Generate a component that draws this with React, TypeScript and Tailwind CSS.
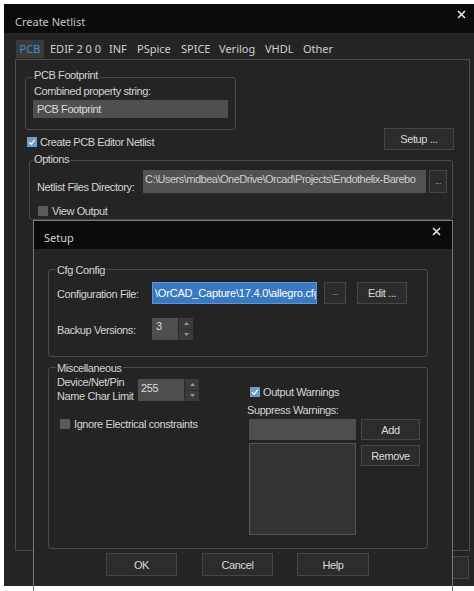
import React from "react";

function CheckBox({ checked }: { checked: boolean }) {
  return checked ? (
    <span className="w-[10px] h-[10px] bg-[#6f9bc4] flex items-center justify-center shrink-0">
      <svg width="8" height="8" viewBox="0 0 8 8">
        <path d="M1 4.2 L3.1 6.2 L7 1.6" stroke="#eef3f8" strokeWidth="1.4" fill="none" />
      </svg>
    </span>
  ) : (
    <span className="w-[10px] h-[10px] bg-[#5a5a5a] shrink-0" />
  );
}

function Btn({ className, children }: { className: string; children: React.ReactNode }) {
  return (
    <div className={"border border-[#464646] bg-[#2c2c2c] flex items-center justify-center text-[#dadada] shrink-0 " + className}>
      {children}
    </div>
  );
}

function SpinArrows() {
  return (
    <div className="w-[15px] h-full flex flex-col bg-[#3b3b3b] border-l border-[#2a2a2a]">
      <div className="flex-1 flex items-center justify-center border-b border-[#2e2e2e]">
        <svg width="5" height="3" viewBox="0 0 5 3"><path d="M0 3 L2.5 0 L5 3 Z" fill="#9a9a9a" /></svg>
      </div>
      <div className="flex-1 flex items-center justify-center">
        <svg width="5" height="3" viewBox="0 0 5 3"><path d="M0 0 L2.5 3 L5 0 Z" fill="#9a9a9a" /></svg>
      </div>
    </div>
  );
}

function CloseX() {
  return (
    <svg width="9" height="9" viewBox="0 0 9 9" className="shrink-0">
      <path d="M1 1 L8 8 M8 1 L1 8" stroke="#e6e6e6" strokeWidth="1.6" />
    </svg>
  );
}

export default function App() {
  return (
    <div className="relative w-[474px] h-[591px] bg-white overflow-hidden pt-[4px] pl-[4px] font-['Liberation_Sans',Arial,sans-serif] text-[11px] tracking-[-0.4px] leading-[14px] text-[#d4d4d4]">
      {/* Outer dialog */}
      <div className="w-[470px] h-[582px] bg-[#242424] flex flex-col">
        {/* Title bar */}
        <div className="h-[29px] bg-[#0b0b0b] flex justify-between pl-[11px] pr-[8px] shrink-0">
          <span className="pt-[11px] font-['Noto_Sans',sans-serif] tracking-normal text-[11px] text-[#c4c4c4]">Create Netlist</span>
          <div className="pt-[6px]"><CloseX /></div>
        </div>
        {/* Tabs */}
        <div className="h-[26px] pt-[7px] pl-[12px] flex items-start font-['Noto_Sans',sans-serif] tracking-normal text-[11px] text-[#d0d0d0] shrink-0">
          <div className="w-[28px] h-[18px] bg-[#3a3a3a] flex items-center justify-center text-[#3f8ed2]">PCB</div>
          <div className="ml-[6px] w-[59px] h-[18px] flex items-center">EDIF 2 0 0</div>
          <div className="w-[28px] h-[18px] flex items-center">INF</div>
          <div className="w-[44px] h-[18px] flex items-center">PSpice</div>
          <div className="w-[38px] h-[18px] flex items-center">SPICE</div>
          <div className="w-[46px] h-[18px] flex items-center">Verilog</div>
          <div className="w-[38px] h-[18px] flex items-center">VHDL</div>
          <div className="w-[40px] h-[18px] flex items-center">Other</div>
        </div>
        {/* Tab panel */}
        <div className="ml-[11px] w-[455px] h-[492px] border border-[#4d4d4d] flex flex-col shrink-0">
          {/* PCB Footprint group */}
          <div className="relative mt-[17px] ml-[9px] w-[211px] h-[53px] border border-[#4a4a4a] rounded-[3px]">
            <span className="absolute left-[7px] -top-[10px] px-[1px] bg-[#242424]">PCB Footprint</span>
            <div className="mt-[6px] ml-[8px]">Combined property string:</div>
            <div className="mt-[2px] ml-[7px] w-[195px] h-[18px] bg-[#4f4f4f] flex items-center pl-[4px] text-[#dcdcdc]">PCB Footprint</div>
          </div>
          {/* Checkbox + Setup */}
          <div className="-mt-[2px] flex items-start justify-between pr-[15px]">
            <div className="mt-[9px] ml-[11px] flex items-center gap-[3px]">
              <CheckBox checked />
              <span className="leading-[10px]">Create PCB Editor Netlist</span>
            </div>
            <Btn className="w-[70px] h-[22px]">Setup ...</Btn>
          </div>
          {/* Options group */}
          <div className="relative mt-[10px] ml-[13px] w-[424px] h-[60px] border border-[#4a4a4a] rounded-[3px]">
            <span className="absolute left-[3px] -top-[9px] px-[1px] bg-[#242424]">Options</span>
            <div className="flex items-start mt-[9px]">
              <span className="ml-[7px] w-[106px] mt-[10px]">Netlist Files Directory:</span>
              <div className="w-[283px] h-[23px] bg-[#525252] pl-[2px] pt-[2px] overflow-hidden whitespace-nowrap tracking-[-0.5px] text-[#cfcfcf]">
                C:\Users\mdbea\OneDrive\Orcad\Projects\Endothelix-Barebo
              </div>
              <Btn className="ml-[3px] w-[18px] h-[23px] text-[8px] text-[#9a9a9a]">...</Btn>
            </div>
            <div className="mt-[12px] ml-[8px] flex items-center gap-[4px]">
              <CheckBox checked={false} />
              <span className="leading-[10px]">View Output</span>
            </div>
          </div>
        </div>
        {/* Outer bottom buttons (mostly hidden) */}
        <div className="mt-[5px] flex justify-end gap-[10px] pr-[5px]">
          <Btn className="w-[75px] h-[23px]">Help</Btn>
        </div>
      </div>

      {/* Setup dialog overlay */}
      <div className="absolute left-[33px] top-[220px] w-[420px] h-[371px] border-x border-t border-[#787878] flex flex-col">
        <div className="h-[28px] bg-[#0b0b0b] flex justify-between pl-[10px] pr-[11px] shrink-0">
          <span className="pt-[10px] font-['Noto_Sans',sans-serif] tracking-normal text-[11px] text-[#d2d2d2]">Setup</span>
          <div className="pt-[6px]"><CloseX /></div>
        </div>
        <div className="flex-1 bg-[#242424] flex flex-col">
          {/* Cfg Config */}
          <div className="relative mt-[20px] ml-[14px] w-[380px] h-[88px] border border-[#4a4a4a] rounded-[3px]">
            <span className="absolute left-[7px] -top-[7px] px-[1px] bg-[#242424]">Cfg Config</span>
            <div className="mt-[12px] flex items-center">
              <span className="ml-[8px] w-[95px] mt-[2px]">Configuration File:</span>
              <div className="w-[165px] h-[22px] bg-[#3a78c0] border border-[#5f97d6] flex items-center pl-[2px] overflow-hidden whitespace-nowrap tracking-[-0.2px] text-white">
                \OrCAD_Capture\17.4.0\allegro.cfg
              </div>
              <Btn className="ml-[7px] w-[22px] h-[22px] text-[8px] text-[#9a9a9a]">...</Btn>
              <Btn className="ml-[11px] w-[50px] h-[22px]">Edit ...</Btn>
            </div>
            <div className="mt-[14px] flex items-center">
              <span className="ml-[8px] w-[95px] mt-[2px]">Backup Versions:</span>
              <div className="w-[41px] h-[22px] flex bg-[#4e4e4e]">
                <div className="flex-1 pl-[4px] pt-[1px] text-[#dcdcdc]">3</div>
                <SpinArrows />
              </div>
            </div>
          </div>
          {/* Miscellaneous */}
          <div className="relative mt-[10px] ml-[14px] w-[380px] h-[182px] border border-[#4a4a4a] rounded-[3px] flex">
            <span className="absolute left-[7px] -top-[7px] px-[1px] bg-[#242424]">Miscellaneous</span>
            <div className="w-[198px] flex flex-col">
              <div className="mt-[7px] flex items-start">
                <div className="ml-[8px] w-[81px] leading-[14px]">
                  <div>Device/Net/Pin</div>
                  <div>Name Char Limit</div>
                </div>
                <div className="mt-[4px] w-[61px] h-[22px] flex bg-[#4e4e4e]">
                  <div className="flex-1 pl-[3px] pt-[2px] text-[#dcdcdc]">255</div>
                  <SpinArrows />
                </div>
              </div>
              <div className="mt-[16px] ml-[11px] flex items-center gap-[4px]">
                <CheckBox checked={false} />
                <span className="leading-[10px]">Ignore Electrical constraints</span>
              </div>
            </div>
            <div className="flex flex-col">
              <div className="mt-[19px] ml-[3px] flex items-center gap-[3px]">
                <CheckBox checked />
                <span className="leading-[10px]">Output Warnings</span>
              </div>
              <div className="mt-[6px]">Suppress Warnings:</div>
              <div className="mt-[2px] ml-[2px] flex items-start">
                <div className="w-[107px] h-[21px] bg-[#4e4e4e]" />
                <Btn className="ml-[5px] w-[59px] h-[21px]">Add</Btn>
              </div>
              <div className="mt-[3px] ml-[2px] flex items-start">
                <div className="w-[107px] h-[92px] bg-[#333333] border border-[#555555]" />
                <Btn className="ml-[5px] mt-[2px] w-[59px] h-[21px]">Remove</Btn>
              </div>
            </div>
          </div>
          {/* Buttons */}
          <div className="mt-[4px] ml-[72px] flex items-start">
            <Btn className="w-[71px] h-[23px]">OK</Btn>
            <Btn className="ml-[25px] w-[71px] h-[23px]">Cancel</Btn>
            <Btn className="ml-[24px] w-[72px] h-[23px]">Help</Btn>
          </div>
        </div>
        <div className="h-[5px] bg-white shrink-0" />
      </div>
    </div>
  );
}
